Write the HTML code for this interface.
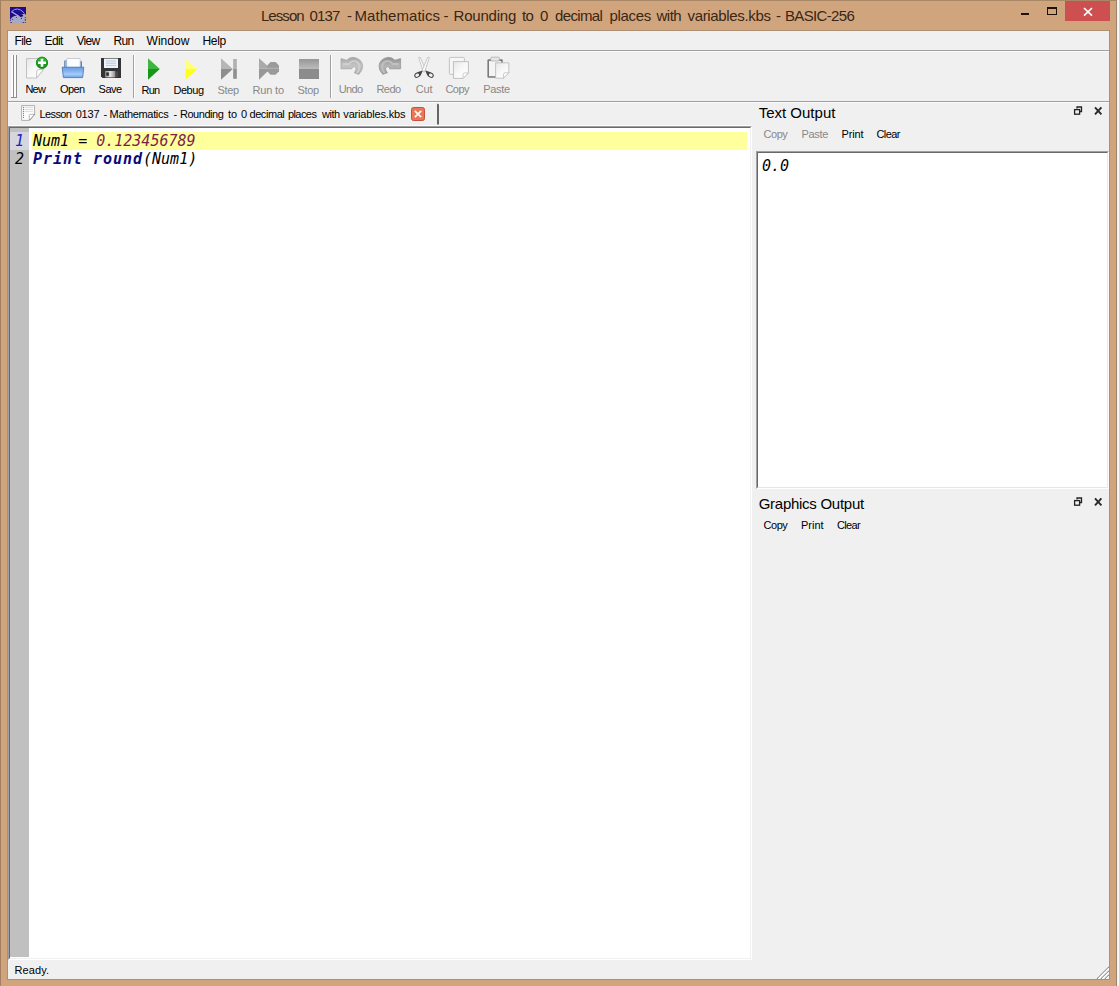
<!DOCTYPE html>
<html lang="en"><head><meta charset="utf-8"><title>BASIC-256</title>
<style>
html,body{margin:0;padding:0;}
body{width:1119px;height:986px;overflow:hidden;background:#f7f7f7;position:relative;font-family:'Liberation Sans',sans-serif;}
.a{position:absolute;}
.t{position:absolute;white-space:pre;line-height:normal;font-family:'Liberation Sans',sans-serif;}
#win{left:0;top:0;width:1117px;height:986px;background:#d0a57e;box-sizing:border-box;border-left:1px solid #a37f5f;border-top:1px solid #a88766;border-right:1px solid #9c8268;}
#content{left:8px;top:31px;width:1101px;height:948px;background:#f0f0f0;}
.hl{height:1px;}
.code{position:absolute;white-space:pre;font-family:'DejaVu Sans Mono','Liberation Mono',monospace;font-size:15px;line-height:18px;font-style:italic;}

</style></head>
<body>
<div id="win" class="a"></div>
<div class="a" style="left:7px;top:30px;width:1103px;height:950px;background:#ad9074"></div>
<div id="content" class="a"></div>
<!-- app icon -->
<svg class="a" style="left:10px;top:7px" width="16" height="16" viewBox="10 7 16 16">
<rect x="10" y="7" width="16" height="16" fill="#1c0c8e"/>
<path d="M10 23 L10 20 Q12.5 15.6 17 15.8 L19 16.6 Q22 13.6 24.6 13.4 L26 15 L26 23 Z" fill="#a9a8c4"/>
<path d="M18.6 15.6 Q21 14.4 23.2 15 L22.6 16.6 Q20.4 17.2 19.4 16.6 Z" fill="#0c0a5c"/>
<path d="M11.4 11.8 Q17.6 5.6 24.2 13" stroke="#9d95ec" stroke-width="1" fill="none"/>
<path d="M11.6 11.8 L19.6 16.8" stroke="#b4b0de" stroke-width="1.3" fill="none"/>
<path d="M14 11.6 Q17.6 8.6 21.4 11.8 Q18 13.4 14 11.6Z" fill="#1a10a4"/>
<g fill="#1e1c4a"><circle cx="12.4" cy="19.3" r="0.55"/><circle cx="16.4" cy="17.4" r="0.5"/><circle cx="21.4" cy="18.4" r="0.55"/>
<rect x="24.8" y="17" width="0.9" height="0.9"/><rect x="24.8" y="19" width="0.9" height="1.6"/><rect x="24.8" y="22" width="0.9" height="0.9"/><rect x="22.6" y="22" width="1.2" height="0.9"/><rect x="10.2" y="20.2" width="0.8" height="0.8"/><rect x="10.4" y="22.2" width="1.6" height="0.7"/></g>
</svg>
<!-- window buttons -->
<div class="a" style="left:1021px;top:13px;width:8px;height:2px;background:#1e1208"></div>
<div class="a" style="left:1047px;top:7px;width:10px;height:8px;box-sizing:border-box;border:1px solid #1e1208;border-top-width:2px"></div>
<div class="a" style="left:1065px;top:1px;width:45px;height:20px;background:#cd4f50"></div>
<svg class="a" style="left:1083px;top:7px" width="10" height="10" viewBox="0 0 10 10"><path d="M1 1 L9 8.6 M9 1 L1 8.6" stroke="#fff" stroke-width="1.7" fill="none"/></svg>

<!-- menubar lines -->
<div class="a hl" style="left:8px;top:50px;width:1101px;background:#a0a0a0"></div>
<div class="a hl" style="left:8px;top:51px;width:1101px;background:#fbfbfb"></div>
<!-- toolbar -->
<div class="a hl" style="left:8px;top:101px;width:1101px;background:#a0a0a0"></div>
<div class="a hl" style="left:8px;top:102px;width:1101px;background:#fbfbfb"></div>
<!-- toolbar handle -->
<div class="a" style="left:11px;top:55px;width:3px;height:43px;box-sizing:border-box;background:#fcfcfc;border-right:1px solid #8e8e8e;border-bottom:1px solid #8e8e8e"></div>
<div class="a" style="left:14px;top:55px;width:3px;height:43px;box-sizing:border-box;background:#fcfcfc;border-right:1px solid #8e8e8e;border-bottom:1px solid #8e8e8e"></div>
<!-- separators -->
<div class="a" style="left:133px;top:55px;width:1px;height:43px;background:#a0a0a0"></div>
<div class="a" style="left:134px;top:55px;width:1px;height:43px;background:#fff"></div>
<div class="a" style="left:330px;top:55px;width:1px;height:43px;background:#a0a0a0"></div>
<div class="a" style="left:331px;top:55px;width:1px;height:43px;background:#fff"></div>
<!--ICONS_START-->
<svg class="a" style="left:8px;top:52px" width="520" height="76" viewBox="8 52 520 76">
<defs>
<linearGradient id="gpg" x1="0" y1="0" x2="1" y2="1"><stop offset="0" stop-color="#e6e6e6"/><stop offset="0.5" stop-color="#f8f8f8"/><stop offset="1" stop-color="#ffffff"/></linearGradient>
<linearGradient id="gfold" x1="0" y1="0" x2="0" y2="1"><stop offset="0" stop-color="#6c9ce2"/><stop offset="0.35" stop-color="#84b0ee"/><stop offset="0.68" stop-color="#a6cdfa"/><stop offset="0.85" stop-color="#86b4f0"/><stop offset="1" stop-color="#6fa0e4"/></linearGradient>
<linearGradient id="ggrn" x1="0" y1="0" x2="0" y2="1"><stop offset="0" stop-color="#3db83d"/><stop offset="1" stop-color="#128a12"/></linearGradient>
<linearGradient id="gmet" x1="0" y1="0" x2="1" y2="0"><stop offset="0" stop-color="#9a9a9a"/><stop offset="0.5" stop-color="#e4e4e4"/><stop offset="1" stop-color="#8a8a8a"/></linearGradient>
<linearGradient id="gstop" x1="0" y1="0" x2="0" y2="1"><stop offset="0" stop-color="#979797"/><stop offset="1" stop-color="#bcbcbc"/></linearGradient>
<linearGradient id="gundo" x1="0" y1="0" x2="0" y2="1"><stop offset="0" stop-color="#a8a8a8"/><stop offset="0.5" stop-color="#c4c4c4"/><stop offset="1" stop-color="#b0b0b0"/></linearGradient>
<linearGradient id="gredo" x1="0" y1="0" x2="0" y2="1"><stop offset="0" stop-color="#909090"/><stop offset="0.5" stop-color="#b4b4b4"/><stop offset="1" stop-color="#a0a0a0"/></linearGradient>
<filter id="blr" x="-20%" y="-20%" width="140%" height="140%"><feGaussianBlur stdDeviation="0.6"/></filter>
</defs>
<!-- New -->
<path d="M26.5 58.5 H43.5 V69.5 L36.5 78 H26.5 Z" fill="url(#gpg)" stroke="#bcbcbc" stroke-width="0.9"/>
<path d="M43.5 69.5 L36.5 78 L36.8 71 Q37 69.6 38.5 69.6 Z" fill="#fdfdfd" stroke="#b8b8b8" stroke-width="0.8"/>
<circle cx="42" cy="62.7" r="6" fill="url(#ggrn)"/>
<circle cx="42" cy="62.7" r="5.6" fill="none" stroke="#0f8a0f" stroke-width="0.8"/>
<path d="M38 62.7 H46 M42 58.7 V66.7" stroke="#fff" stroke-width="2.6"/>
<!-- Open -->
<path d="M64.2 67.4 V60.4 H66.8 V67.4 Z M80.2 67.4 V61.2 H82 V67.4 Z" fill="#5583c4"/>
<path d="M65.2 67 V61.2 H66.2 V67 Z" fill="#9cc0ee"/>
<rect x="66.7" y="58.5" width="13.5" height="9" rx="0.8" fill="#fbfcff" stroke="#b4b8c0" stroke-width="0.7"/>
<path d="M62.2 67.2 H83.8 L82.6 77.6 H63.4 Z" fill="url(#gfold)" stroke="#4a7bc4" stroke-width="0.9"/>
<!-- Save -->
<path d="M101 58 H121 V78 H102.5 L101 76.5 Z" fill="#353535"/>
<rect x="104" y="58.6" width="14" height="9.4" fill="#eef3fa"/>
<path d="M106 61 H116 M106 63.2 H116 M106 65.4 H116" stroke="#a9bbd6" stroke-width="0.8"/>
<rect x="105.2" y="71" width="10.2" height="6.4" fill="url(#gmet)"/>
<rect x="106.3" y="72.4" width="2.5" height="3.4" fill="#2a2a2a"/>
<rect x="116" y="71.5" width="2" height="5.5" fill="#4a4a4a"/>
<!-- Run -->
<path d="M148 58.3 L159.8 69 L148 69 Z" fill="#3cb63c"/>
<path d="M148 69 L159.8 69 L148 79.8 Z" fill="#15981a"/>
<!-- Debug -->
<g filter="url(#blr)"><path d="M185.6 59 L197.3 69 L185.6 69 Z" fill="#ffff7a"/>
<path d="M185.6 69 L197.3 69 L185.6 79.6 Z" fill="#ffff1e"/></g>
<!-- Step -->
<path d="M221 58.2 L232.8 69 L221 69 Z" fill="#b6b6b6"/>
<path d="M221 69 L232.8 69 L221 79.8 Z" fill="#8e8e8e"/>
<rect x="233.2" y="59" width="3.6" height="10" fill="#b0b0b0"/>
<rect x="233.2" y="69" width="3.6" height="9.8" fill="#909090"/>
<!-- Run to -->
<path d="M259 58.3 L270.6 68.6 L259 68.6 Z" fill="#a9a9a9"/>
<path d="M259 68.6 L270.6 68.6 L259 79.8 Z" fill="#989898"/>
<path d="M270.5 62 H275.6 L279 65.6 V71.2 L275.6 74.8 H270.5 L267.3 71.2 V65.6 Z" fill="#9a9a9a"/>
<rect x="259" y="67.6" width="20" height="1.4" fill="#b4b4b4" opacity="0.8"/>
<!-- Stop -->
<rect x="299" y="59" width="20" height="10" fill="url(#gstop)"/>
<rect x="299" y="69" width="20" height="10" fill="#8c8c8c"/>
<!-- Undo -->
<path d="M341 58.6 L341 68.8 L351.8 68.8 Q352.4 66.4 354.2 66.6 Q357.2 67.6 355.6 70.6 L354.2 72.8 L358.8 74.4 Q363 70 362.6 65.6 Q361.6 58.6 354 57.4 Q349.6 57 346.6 60.2 Z" fill="url(#gundo)" stroke="#a4a4a4" stroke-width="0.7"/>
<path d="M343.4 64 L349 64 Q351 60.6 355 61.2 Q359.6 62.6 359.4 67.4 Q359 70.6 357.4 72.4" stroke="#d2d2d2" stroke-width="1.8" fill="none" stroke-linecap="round" opacity="0.85"/>
<!-- Redo -->
<path d="M400.6 58.6 L400.6 68.8 L389.8 68.8 Q389.2 66.4 387.4 66.6 Q384.4 67.6 386 70.6 L387.4 72.8 L382.8 74.4 Q378.6 70 379 65.6 Q380 58.6 387.6 57.4 Q392 57 395 60.2 Z" fill="url(#gredo)" stroke="#929292" stroke-width="0.7"/>
<path d="M398.2 64 L392.6 64 Q390.6 60.6 386.6 61.2 Q382 62.6 382.2 67.4 Q382.6 70.6 384.2 72.4" stroke="#c6c6c6" stroke-width="1.8" fill="none" stroke-linecap="round" opacity="0.8"/>
<!-- Cut -->
<path d="M418.6 57.4 L420.4 57.6 L426 70.6 L423.4 72 Z" fill="#fafafa" stroke="#b4b4b4" stroke-width="0.7"/>
<path d="M429.4 57.4 L427.6 57.6 L422 70.6 L424.6 72 Z" fill="#fafafa" stroke="#b4b4b4" stroke-width="0.7"/>
<path d="M422.6 70.4 L418 72 Q414 73.2 414.2 76 Q414.8 78.6 418 77.6 Q420.6 76.6 421.6 73.4 Z" fill="#454545"/>
<ellipse cx="417.2" cy="75.2" rx="2" ry="1.5" transform="rotate(-25 417.2 75.2)" fill="#f0f0f0"/>
<path d="M425.4 70.4 L430 72 Q434 73.2 433.8 76 Q433.2 78.6 430 77.6 Q427.4 76.6 426.4 73.4 Z" fill="#454545"/>
<ellipse cx="430.8" cy="75.2" rx="2" ry="1.5" transform="rotate(25 430.8 75.2)" fill="#f0f0f0"/>
<!-- Copy -->
<rect x="449.4" y="57.4" width="15" height="17" rx="1" fill="#f6f6f6" stroke="#b8b8b8" stroke-width="0.8"/>
<path d="M453.4 61.6 H468.4 V73 L463 78.4 H453.4 Z" fill="url(#gpg)" stroke="#b4b4b4" stroke-width="0.8"/>
<path d="M468.4 73 L463 78.4 L463.2 74.2 Q463.4 73 464.6 73 Z" fill="#fff" stroke="#b8b8b8" stroke-width="0.7"/>
<!-- Paste -->
<rect x="487.4" y="59.2" width="15.4" height="18.6" rx="1.4" fill="#7a7a7a"/>
<rect x="489" y="61" width="12.2" height="15.2" fill="#f4f4f4"/>
<rect x="490.8" y="57.2" width="8.6" height="3.8" rx="0.8" fill="#e6e6e6" stroke="#a8a8a8" stroke-width="0.7"/>
<path d="M495.6 62.8 H508.8 V72.8 L503.4 78.2 H495.6 Z" fill="url(#gpg)" stroke="#b8b8b8" stroke-width="0.8"/>
<path d="M508.8 72.8 L503.4 78.2 L503.6 74 Q503.8 72.8 505 72.8 Z" fill="#fff" stroke="#b8b8b8" stroke-width="0.7"/>
<!-- tab doc icon -->
<path d="M21.6 105.6 H34.6 V114.6 L29.6 120.4 H21.6 Z" fill="#fcfcfc" stroke="#a8a8a8" stroke-width="0.9"/>
<path d="M24.6 107.4 H33 M24.6 109.4 H33 M24.6 111.4 H33" stroke="#d4dde6" stroke-width="1"/>
<path d="M23.1 107.4 h0.9 M23.1 109.4 h0.9 M23.1 111.4 h0.9 M23.1 113.4 h0.9 M23.1 115.4 h0.9 M23.1 117.4 h0.9" stroke="#555" stroke-width="0.9"/>
<path d="M34.4 114.4 L29.4 120 " stroke="#444" stroke-width="1"/>
<path d="M34.4 114.4 H30.4 Q29.2 114.4 29.2 115.6 L29.4 120" fill="#fff" stroke="#999" stroke-width="0.7"/>
<path d="M437.1 103.4 L438.9 104.6 V124.6 H437.1 Z" fill="#565656"/>
<!-- tab close -->
<rect x="411.5" y="107.5" width="13" height="13" rx="2" fill="#e8775a" stroke="#c9503e" stroke-width="1"/>
<path d="M414.8 110.8 L421.2 117.2 M421.2 110.8 L414.8 117.2" stroke="#fff8f0" stroke-width="1.7"/>
</svg>
<!--ICONS_END-->

<!-- tab bar -->
<div class="a hl" style="left:8px;top:125px;width:744px;background:#fafafa"></div>
<!-- editor -->
<div class="a" style="left:8px;top:126px;width:744px;height:834px;background:#fff;box-sizing:border-box;border-top:1px solid #a0a0a0;border-left:1px solid #a0a0a0;border-right:1px solid #fff;border-bottom:1px solid #fff"></div>
<div class="a" style="left:9px;top:127px;width:742px;height:832px;background:#fff;box-sizing:border-box;border-top:1px solid #696969;border-left:1px solid #696969;border-right:1px solid #f0f0f4;border-bottom:1px solid #f0f0f0"></div>
<div class="a" style="left:10px;top:128px;width:19px;height:829px;background:#c0c0c0"></div>
<div class="a" style="left:10px;top:132px;width:19px;height:18px;background:#d6d6de"></div>
<div class="a" style="left:32px;top:132px;width:715px;height:18px;background:#ffff9c"></div>
<span class="code" style="left:15px;top:132px;color:#2222cc">1</span>
<span class="code" style="left:15px;top:150px;color:#000">2</span>
<span class="code" style="left:33px;top:132px;color:#000">Num1 = <span style="color:#7a1f4c">0.123456789</span></span>
<span class="code" style="left:33px;top:150px;color:#000"><b style="color:#0a0a7a;letter-spacing:0.97px">Print round</b>(Num1)</span>
<!-- text output box -->
<div class="a" style="left:756px;top:151px;width:353px;height:338px;background:#fff;box-sizing:border-box;border-top:1px solid #a0a0a0;border-left:1px solid #a0a0a0;border-right:1px solid #fff;border-bottom:1px solid #fff"></div>
<div class="a" style="left:757px;top:152px;width:351px;height:336px;background:#fff;box-sizing:border-box;border-top:1px solid #696969;border-left:1px solid #696969;border-right:1px solid #e8e8e8;border-bottom:1px solid #e6e6e6"></div>
<span class="code" style="left:762px;top:157px;color:#000">0.0</span>
<!-- dock buttons -->
<svg class="a" style="left:1073px;top:105px" width="30" height="11" viewBox="0 0 30 11">
<path d="M4 3.5 V2 H8.5 V6.5 H7" stroke="#222" stroke-width="1.3" fill="none"/><rect x="1.6" y="4.6" width="5" height="4.6" stroke="#222" stroke-width="1.3" fill="none"/>
<path d="M22 2.3 L28.4 9.3 M28.4 2.3 L22 9.3" stroke="#2a2a2a" stroke-width="1.9" fill="none"/></svg>
<svg class="a" style="left:1073px;top:496px" width="30" height="11" viewBox="0 0 30 11">
<path d="M4 3.5 V2 H8.5 V6.5 H7" stroke="#222" stroke-width="1.3" fill="none"/><rect x="1.6" y="4.6" width="5" height="4.6" stroke="#222" stroke-width="1.3" fill="none"/>
<path d="M22 2.3 L28.4 9.3 M28.4 2.3 L22 9.3" stroke="#2a2a2a" stroke-width="1.9" fill="none"/></svg>
<!-- size grip -->
<svg class="a" style="left:1096px;top:966px" width="13" height="13" viewBox="0 0 13 13"><path d="M1 13 L13 1 M5 13 L13 5 M9 13 L13 9" stroke="#868c94" stroke-width="1.25" fill="none"/><path d="M2.2 13 L13 2.2 M6.2 13 L13 6.2 M10.2 13 L13 10.2" stroke="#fff" stroke-width="1.25" fill="none"/></svg>

<!-- text -->
<span class="t" style="left:260.9px;top:7.2px;font-size:15px;color:#3a2613;letter-spacing:-0.91px;">Lesson</span>
<span class="t" style="left:309.4px;top:7.2px;font-size:15px;color:#3a2613;letter-spacing:-0.81px;">0137</span>
<span class="t" style="left:346.9px;top:7.2px;font-size:15px;color:#3a2613;letter-spacing:0.00px;">-</span>
<span class="t" style="left:354.5px;top:7.2px;font-size:15px;color:#3a2613;letter-spacing:0.05px;">Mathematics</span>
<span class="t" style="left:443.6px;top:7.2px;font-size:15px;color:#3a2613;letter-spacing:0.00px;">-</span>
<span class="t" style="left:453.5px;top:7.2px;font-size:15px;color:#3a2613;letter-spacing:-0.20px;">Rounding</span>
<span class="t" style="left:522.0px;top:7.2px;font-size:15px;color:#3a2613;letter-spacing:-0.60px;">to</span>
<span class="t" style="left:540.0px;top:7.2px;font-size:15px;color:#3a2613;letter-spacing:0.00px;">0</span>
<span class="t" style="left:555.0px;top:7.2px;font-size:15px;color:#3a2613;letter-spacing:-0.64px;">decimal</span>
<span class="t" style="left:609.5px;top:7.2px;font-size:15px;color:#3a2613;letter-spacing:-0.31px;">places</span>
<span class="t" style="left:656.5px;top:7.2px;font-size:15px;color:#3a2613;letter-spacing:-0.51px;">with</span>
<span class="t" style="left:687.5px;top:7.2px;font-size:15px;color:#3a2613;letter-spacing:-0.34px;">variables.kbs</span>
<span class="t" style="left:776.0px;top:7.2px;font-size:15px;color:#3a2613;letter-spacing:0.00px;">-</span>
<span class="t" style="left:785.0px;top:7.2px;font-size:15px;color:#3a2613;letter-spacing:-0.65px;">BASIC-256</span>
<span class="t" style="left:14.5px;top:33.6px;font-size:12px;color:#000;letter-spacing:-0.65px;">File</span>
<span class="t" style="left:44.6px;top:33.6px;font-size:12px;color:#000;letter-spacing:-0.65px;">Edit</span>
<span class="t" style="left:76.5px;top:33.6px;font-size:12px;color:#000;letter-spacing:-0.68px;">View</span>
<span class="t" style="left:113.5px;top:33.6px;font-size:12px;color:#000;letter-spacing:-0.67px;">Run</span>
<span class="t" style="left:146.5px;top:33.6px;font-size:12px;color:#000;letter-spacing:0.06px;">Window</span>
<span class="t" style="left:202.5px;top:33.6px;font-size:12px;color:#000;letter-spacing:-0.34px;">Help</span>
<span class="t" style="left:25.5px;top:82.5px;font-size:11px;color:#000;letter-spacing:-0.83px;">New</span>
<span class="t" style="left:59.9px;top:82.5px;font-size:11px;color:#000;letter-spacing:-0.53px;">Open</span>
<span class="t" style="left:98.6px;top:82.5px;font-size:11px;color:#000;letter-spacing:-0.52px;">Save</span>
<span class="t" style="left:141.5px;top:83.6px;font-size:11px;color:#000;letter-spacing:-0.78px;">Run</span>
<span class="t" style="left:173.4px;top:83.6px;font-size:11px;color:#000;letter-spacing:-0.42px;">Debug</span>
<span class="t" style="left:217.5px;top:83.6px;font-size:11px;color:#888;letter-spacing:-0.34px;">Step</span>
<span class="t" style="left:252.5px;top:83.6px;font-size:11px;color:#888;letter-spacing:-0.16px;">Run to</span>
<span class="t" style="left:297.5px;top:83.6px;font-size:11px;color:#888;letter-spacing:-0.34px;">Stop</span>
<span class="t" style="left:338.8px;top:82.5px;font-size:11px;color:#888;letter-spacing:-0.66px;">Undo</span>
<span class="t" style="left:376.4px;top:82.5px;font-size:11px;color:#888;letter-spacing:-0.53px;">Redo</span>
<span class="t" style="left:415.7px;top:82.5px;font-size:11px;color:#888;letter-spacing:-0.18px;">Cut</span>
<span class="t" style="left:445.4px;top:82.5px;font-size:11px;color:#888;letter-spacing:-0.53px;">Copy</span>
<span class="t" style="left:483.3px;top:82.5px;font-size:11px;color:#888;letter-spacing:-0.33px;">Paste</span>
<span class="t" style="left:39.6px;top:108.4px;font-size:11px;color:#000;letter-spacing:-0.65px;">Lesson</span>
<span class="t" style="left:75.7px;top:108.4px;font-size:11px;color:#000;letter-spacing:-0.22px;">0137</span>
<span class="t" style="left:103.6px;top:108.4px;font-size:11px;color:#000;letter-spacing:0.00px;">-</span>
<span class="t" style="left:109.6px;top:108.4px;font-size:11px;color:#000;letter-spacing:-0.33px;">Mathematics</span>
<span class="t" style="left:173.6px;top:108.4px;font-size:11px;color:#000;letter-spacing:0.00px;">-</span>
<span class="t" style="left:179.9px;top:108.4px;font-size:11px;color:#000;letter-spacing:-0.45px;">Rounding</span>
<span class="t" style="left:228.0px;top:108.4px;font-size:11px;color:#000;letter-spacing:-0.06px;">to</span>
<span class="t" style="left:241.1px;top:108.4px;font-size:11px;color:#000;letter-spacing:0.00px;">0</span>
<span class="t" style="left:249.5px;top:108.4px;font-size:11px;color:#000;letter-spacing:-0.44px;">decimal</span>
<span class="t" style="left:287.9px;top:108.4px;font-size:11px;color:#000;letter-spacing:-0.56px;">places</span>
<span class="t" style="left:322.0px;top:108.4px;font-size:11px;color:#000;letter-spacing:-0.45px;">with</span>
<span class="t" style="left:343.3px;top:108.4px;font-size:11px;color:#000;letter-spacing:-0.17px;">variables.kbs</span>
<span class="t" style="left:758.7px;top:103.9px;font-size:15px;color:#000;letter-spacing:-0.00px;">Text Output</span>
<span class="t" style="left:763.5px;top:127.7px;font-size:11px;color:#888;letter-spacing:-0.46px;">Copy</span>
<span class="t" style="left:801.5px;top:127.7px;font-size:11px;color:#888;letter-spacing:-0.30px;">Paste</span>
<span class="t" style="left:841.5px;top:127.7px;font-size:11px;color:#000;letter-spacing:-0.14px;">Print</span>
<span class="t" style="left:876.5px;top:127.7px;font-size:11px;color:#000;letter-spacing:-0.58px;">Clear</span>
<span class="t" style="left:758.7px;top:494.9px;font-size:15px;color:#000;letter-spacing:-0.27px;">Graphics Output</span>
<span class="t" style="left:763.5px;top:518.7px;font-size:11px;color:#000;letter-spacing:-0.46px;">Copy</span>
<span class="t" style="left:801.0px;top:518.7px;font-size:11px;color:#000;letter-spacing:-0.02px;">Print</span>
<span class="t" style="left:837.0px;top:518.7px;font-size:11px;color:#000;letter-spacing:-0.66px;">Clear</span>
<span class="t" style="left:14.5px;top:963.5px;font-size:11px;color:#000;letter-spacing:0.10px;">Ready.</span>

</body></html>
